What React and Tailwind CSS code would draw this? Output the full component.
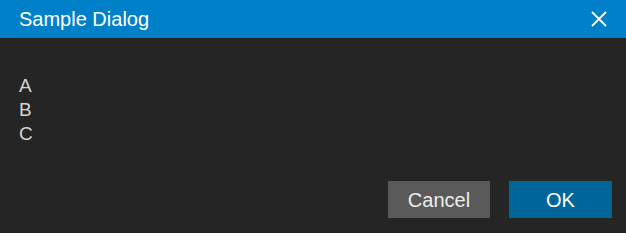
import React from "react";

const App = () => {
    return (
        <div className="w-[626px] h-[233px] bg-[#252525] flex flex-col font-['Liberation_Sans',Arial,sans-serif]">
            {/* Title bar */}
            <div className="h-[38px] bg-[#0080c9] flex items-center justify-between pl-[19px] pr-[19px]">
                <span className="text-white text-[20px] leading-none">Sample Dialog</span>
                <svg width="16" height="16" viewBox="0 0 16 16" className="text-white">
                    <path d="M1 1 L15 15 M15 1 L1 15" stroke="currentColor" strokeWidth="1.8" fill="none" />
                </svg>
            </div>

            {/* Body */}
            <div className="pt-[36px] pl-[19px] text-[19px] leading-[24px] text-[#d4d4d4]">
                <div>A</div>
                <div>B</div>
                <div>C</div>
            </div>

            {/* Buttons */}
            <div className="mt-auto flex justify-end gap-[19px] pr-[14px] pb-[15px]">
                <button className="w-[102px] h-[37px] bg-[#5a5a5a] text-[#eeeeee] text-[20px]">Cancel</button>
                <button className="w-[103px] h-[37px] bg-[#006699] text-white text-[20px]">OK</button>
            </div>
        </div>
    );
};

export default App;
